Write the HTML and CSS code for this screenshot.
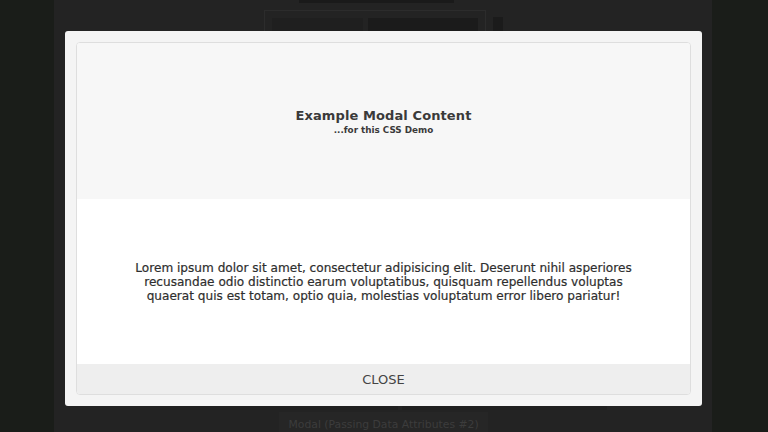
FILE: index.html
```html
<!DOCTYPE html>
<html>
<head>
<meta charset="utf-8">
<link rel="stylesheet" href="styles.css">
</head>
<body>
<div class="page">
  <div class="topbar"></div>
  <div class="demo-row">
    <div class="demo-box">
      <div class="demo-a"></div>
      <div class="demo-b"></div>
    </div>
    <div class="demo-small"></div>
  </div>
  <div class="spacer"></div>
  <div class="under-row">
    <div class="under-a"></div>
    <div class="under-b"></div>
  </div>
  <div class="under-btn">Modal (Passing Data Attributes #2)</div>
</div>

<div class="modal">
  <div class="modal-inner">
    <div class="modal-header">
      <h1 class="title">Example Modal Content</h1>
      <p class="subtitle">...for this CSS Demo</p>
    </div>
    <div class="modal-body">
      <p>Lorem ipsum dolor sit amet, consectetur adipisicing elit. Deserunt nihil asperiores<br>recusandae odio distinctio earum voluptatibus, quisquam repellendus voluptas<br>quaerat quis est totam, optio quia, molestias voluptatum error libero pariatur!</p>
    </div>
    <div class="modal-footer">CLOSE</div>
  </div>
</div>
</body>
</html>
```
FILE: styles.css
```css
html, body {
  margin: 0;
  padding: 0;
  height: 100%;
}
body {
  background: #1a1d19;
  font-family: "DejaVu Sans", "Noto Sans", sans-serif;
  overflow: hidden;
}
.page {
  width: 658px;
  height: 432px;
  margin-left: 54px;
  background: #232323;
  display: flex;
  flex-direction: column;
  align-items: center;
}
.topbar {
  width: 155px;
  height: 3px;
  background: #1a1a1a;
  margin-right: 13px;
}
.demo-row {
  display: flex;
  gap: 7px;
  margin-top: 7px;
  align-items: flex-start;
}
.demo-box {
  width: 206px;
  height: 40px;
  border: 1px solid #2c2c2c;
  padding: 7px 7px 0 7px;
  display: flex;
  gap: 5px;
}
.demo-a {
  width: 91px;
  height: 30px;
  background: #1f1f1f;
}
.demo-b {
  width: 110px;
  height: 30px;
  background: #1b1b1b;
}
.demo-small {
  width: 10px;
  height: 20px;
  margin-top: 7px;
  background: #1b1b1b;
}
.spacer {
  height: 345px;
}
.under-row {
  display: flex;
  gap: 4px;
}
.under-a {
  width: 238px;
  height: 8px;
  background: #1f1f1f;
}
.under-b {
  width: 205px;
  height: 8px;
  background: #1f1f1f;
}
.under-btn {
  margin-top: 2px;
  width: 209px;
  height: 20px;
  background: #262626;
  color: #3c3c3c;
  font-size: 10.8px;
  line-height: 12px;
  padding: 7px 0 0 10px;
  box-sizing: border-box;
  white-space: nowrap;
}

.modal {
  position: fixed;
  left: 65px;
  top: 31px;
  width: 637px;
  height: 375px;
  box-sizing: border-box;
  padding: 11px;
  background: #f4f4f4;
  border-radius: 3px;
  display: flex;
}
.modal-inner {
  flex: 1;
  border: 1px solid #dedede;
  border-radius: 4px;
  display: flex;
  flex-direction: column;
  overflow: hidden;
  background: #fff;
}
.modal-header {
  height: 156px;
  background: #f7f7f7;
  display: flex;
  flex-direction: column;
  align-items: center;
  justify-content: center;
  color: #3a3a3a;
  padding-top: 2px;
  box-sizing: border-box;
}
.title {
  margin: 0;
  font-size: 13px;
  font-weight: bold;
  line-height: 16px;
  letter-spacing: 0.1px;
}
.subtitle {
  margin: 1px 0 0 0;
  font-size: 8.8px;
  font-weight: bold;
  line-height: 11px;
}
.modal-body {
  flex: 1;
  background: #ffffff;
  display: flex;
  align-items: center;
  justify-content: center;
  color: #2e2e2e;
}
.modal-body p {
  margin: 0;
  text-align: center;
  font-size: 12.1px;
  line-height: 14px;
  padding-top: 1px;
  -webkit-text-stroke: 0.2px #2e2e2e;
}
.modal-footer {
  height: 30px;
  background: #eeeeee;
  color: #444;
  font-size: 13px;
  display: flex;
  align-items: center;
  justify-content: center;
  padding-top: 1px;
  box-sizing: border-box;
}
```
